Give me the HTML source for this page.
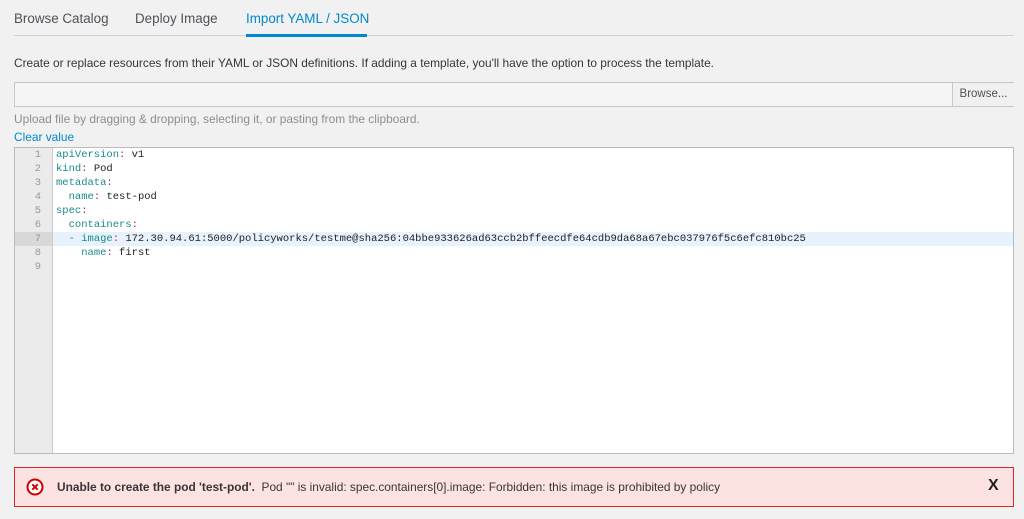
<!DOCTYPE html>
<html><head><meta charset="utf-8"><style>
body{margin:0;width:1024px;height:519px;background:#f1f1f1;font-family:"Liberation Sans",sans-serif;color:#363636;position:relative;overflow:hidden}
.a{position:absolute}
.tab{position:absolute;top:11px;font-size:13.4px;color:#4d5258}
.mono{font-family:"Liberation Mono",monospace;font-size:10.5px}
.ln{position:absolute;left:0;width:26px;text-align:right;color:#999;}
.cl{position:absolute;left:41px;white-space:pre;color:#222}
.k{color:#1a8a8a}.p{color:#a0287a}
</style></head><body>
<div class="tab" style="left:14px">Browse Catalog</div>
<div class="tab" style="left:135px">Deploy Image</div>
<div class="tab" style="left:246px;color:#0088ce">Import YAML / JSON</div>
<div class="a" style="left:14px;top:35px;width:1000px;height:1px;background:#d1d1d1"></div>
<div class="a" style="left:246px;top:34px;width:121px;height:3px;background:#0088ce"></div>
<div class="a" style="left:14px;top:56px;font-size:11.9px;color:#363636">Create or replace resources from their YAML or JSON definitions. If adding a template, you'll have the option to process the template.</div>
<div class="a" style="left:14px;top:82px;width:998px;height:23px;border:1px solid #c8c8c8;background:#f5f5f5"></div>
<div class="a" style="left:952px;top:83px;width:61px;height:23px;border-left:1px solid #c8c8c8;background:#f0f0f0;font-size:11.5px;line-height:23px;text-align:center;color:#4d5258">Browse...</div>
<div class="a" style="left:14px;top:112px;font-size:11.9px;color:#8b8d8f">Upload file by dragging &amp; dropping, selecting it, or pasting from the clipboard.</div>
<div class="a" style="left:14px;top:130px;font-size:11.9px;color:#0088ce">Clear value</div>
<div class="a mono" style="left:14px;top:147px;width:998px;height:305px;border:1px solid #bbb;background:#fff">
<div class="a" style="left:0;top:0;width:37px;height:305px;background:#ebebeb;border-right:1px solid #ccc"></div>
<div class="a" style="left:38px;top:84px;width:960px;height:14px;background:#e8f2fc"></div>
<div class="a" style="left:0;top:84px;width:37px;height:14px;background:#d8d8d8"></div>
<div class="ln" style="top:1px">1</div><div class="ln" style="top:15px">2</div><div class="ln" style="top:29px">3</div><div class="ln" style="top:43px">4</div><div class="ln" style="top:57px">5</div><div class="ln" style="top:71px">6</div><div class="ln" style="top:85px">7</div><div class="ln" style="top:99px">8</div><div class="ln" style="top:113px">9</div>
<div class="cl" style="top:1px"><span class="k">apiVersion</span><span class="p">:</span> v1</div>
<div class="cl" style="top:15px"><span class="k">kind</span><span class="p">:</span> Pod</div>
<div class="cl" style="top:29px"><span class="k">metadata</span><span class="p">:</span></div>
<div class="cl" style="top:43px">  <span class="k">name</span><span class="p">:</span> test-pod</div>
<div class="cl" style="top:57px"><span class="k">spec</span><span class="p">:</span></div>
<div class="cl" style="top:71px">  <span class="k">containers</span><span class="p">:</span></div>
<div class="cl" style="top:85px">  <span class="k">- image</span><span class="p">:</span> 172.30.94.61:5000/policyworks/testme@sha256:04bbe933626ad63ccb2bffeecdfe64cdb9da68a67ebc037976f5c6efc810bc25</div>
<div class="cl" style="top:99px">    <span class="k">name</span><span class="p">:</span> first</div>
</div>
<div class="a" style="left:14px;top:467px;width:998px;height:38px;border:1px solid #d9262a;background:#fde2e2"></div>
<svg class="a" style="left:26px;top:478px" width="18" height="18" viewBox="0 0 18 18"><circle cx="9" cy="9" r="7.5" fill="#fff" stroke="#cc0000" stroke-width="2"/><path d="M6.3 6.3L11.7 11.7M11.7 6.3L6.3 11.7" stroke="#cc0000" stroke-width="2"/></svg>
<div class="a" style="left:57px;top:480px;font-size:11.9px;color:#363636"><b>Unable to create the pod 'test-pod'.</b>&nbsp; Pod "" is invalid: spec.containers[0].image: Forbidden: this image is prohibited by policy</div>
<div class="a" style="left:988px;top:477px;font-size:16px;font-weight:bold;color:#222">X</div>
</body></html>
